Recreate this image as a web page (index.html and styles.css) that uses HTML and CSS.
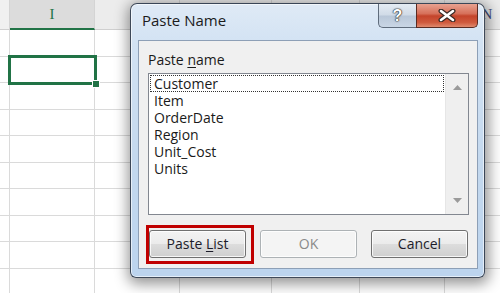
FILE: index.html
```html
<!DOCTYPE html>
<html>
<head>
<meta charset="utf-8">
<link rel="stylesheet" href="styles.css">
</head>
<body>
<div class="sheet">
  <div class="grid">
    <div class="hd corner"></div>
    <div class="hd sel-col">I</div>
    <div class="hd"></div>
    <div class="hd"></div>
    <div class="hd"></div>
    <div class="hd"></div>
    <div class="hd">N</div>
  </div>
  <div class="grid rows" id="rows"></div>
  <div class="selection"><span class="handle"></span></div>
</div>

<div class="dialog">
  <div class="titlebar">
    <span class="title">Paste Name</span>
    <div class="caption-btns">
      <div class="cap help">?</div>
      <div class="cap close">
        <svg width="18" height="13" viewBox="0 0 18 13">
          <path d="M3 2 L15 11 M15 2 L3 11" stroke="#3a2a26" stroke-width="5" stroke-linecap="round"/>
          <path d="M3 2 L15 11 M15 2 L3 11" stroke="#ffffff" stroke-width="2.6" stroke-linecap="round"/>
        </svg>
      </div>
    </div>
  </div>
  <div class="panel">
    <div class="label">Paste <u>n</u>ame</div>
    <div class="listbox">
      <div class="items">
        <div class="item focus">Customer</div>
        <div class="item">Item</div>
        <div class="item">OrderDate</div>
        <div class="item">Region</div>
        <div class="item">Unit_Cost</div>
        <div class="item">Units</div>
      </div>
      <div class="scrollbar">
        <svg class="arrow" width="9" height="5" viewBox="0 0 9 5"><path d="M0 5 L4.5 0 L9 5 Z" fill="#9a9a9a"/></svg>
        <svg class="arrow" width="9" height="5" viewBox="0 0 9 5"><path d="M0 0 L4.5 5 L9 0 Z" fill="#9a9a9a"/></svg>
      </div>
    </div>
    <div class="buttons">
      <div class="btn-wrap">
        <div class="btn"><span>Paste <u>L</u>ist</span></div>
        <div class="highlight"></div>
      </div>
      <div class="btn disabled"><span>OK</span></div>
      <div class="btn"><span>Cancel</span></div>
    </div>
  </div>
</div>
<script>
  var rows = document.getElementById('rows');
  for (var r = 0; r < 10; r++) {
    for (var c = 0; c < 7; c++) {
      var d = document.createElement('div');
      d.className = 'cell';
      rows.appendChild(d);
    }
  }
</script>
</body>
</html>
```

FILE: styles.css
```css
html, body {
  margin: 0;
  padding: 0;
}
body {
  width: 500px;
  height: 293px;
  overflow: hidden;
  position: relative;
  background: #ffffff;
  font-family: "Open Sans", "Noto Sans", sans-serif;
}

.sheet {
  position: relative;
  width: 500px;
  height: 293px;
  overflow: hidden;
}
.grid {
  display: grid;
  grid-template-columns: 10px 85px 85px 92px 88px 85px 85px;
  width: 530px;
}
.hd {
  height: 30px;
  box-sizing: border-box;
  background: #ececec;
  border-right: 1px solid #d4d4d4;
  border-bottom: 1px solid #cfcfcf;
  font-family: "Liberation Serif", serif;
  font-size: 15px;
  color: #3c4a7a;
  display: flex;
  align-items: center;
  justify-content: center;
}
.hd.corner {
  background: #f0f0f0;
}
.hd.sel-col {
  background: #dcdcdc;
  color: #217346;
  border-bottom: 2px solid #217346;
}
.rows {
  grid-auto-rows: 26.5px;
}
.cell {
  box-sizing: border-box;
  border-right: 1px solid #dadada;
  border-bottom: 1px solid #dadada;
}
.selection {
  position: absolute;
  left: 8px;
  top: 55px;
  width: 89px;
  height: 30px;
  box-sizing: border-box;
  border: 3px solid #217346;
}
.handle {
  position: absolute;
  right: -6px;
  bottom: -6px;
  width: 6px;
  height: 6px;
  background: #217346;
  border: 1px solid #ffffff;
}

/* Dialog window */
.dialog {
  position: absolute;
  left: 130px;
  top: 3px;
  width: 355px;
  height: 275px;
  box-sizing: border-box;
  border: 1px solid rgba(35, 45, 60, 0.85);
  border-radius: 7px 7px 6px 6px;
  background: linear-gradient(to bottom, #dfeaf6 0%, #d2e2f3 15%, #c3d8ee 60%, #bcd4ee 100%);
  box-shadow: 1px 3px 14px 3px rgba(0, 0, 0, 0.42), inset 0 0 0 1px rgba(255, 255, 255, 0.6);
  padding: 0 6px 8px 7px;
  display: flex;
  flex-direction: column;
}
.titlebar {
  height: 36px;
  display: flex;
  align-items: flex-start;
  padding-left: 4px;
  flex: none;
}
.title {
  margin-top: 6px;
  font-size: 15px;
  line-height: 20px;
  color: #1b1b1b;
}
.caption-btns {
  margin-left: auto;
  display: flex;
  height: 24px;
}
.cap {
  box-sizing: border-box;
  height: 24px;
  display: flex;
  align-items: center;
  justify-content: center;
}
.help {
  width: 38px;
  border: 1px solid #5f6c7c;
  border-top: none;
  border-right: none;
  border-radius: 0 0 0 5px;
  background: linear-gradient(to bottom, #e4ebf3 0%, #d0dbe7 48%, #b9c7d8 52%, #c9d6e5 100%);
  font-family: "Liberation Sans", sans-serif;
  font-weight: bold;
  font-size: 16px;
  line-height: 18px;
  color: #ffffff;
  text-shadow: 0 0 1px #222, 0 0 1px #222, 0 0 2px #333;
}
.close {
  width: 62px;
  border: 1px solid #5a2b22;
  border-top: none;
  border-radius: 0 0 5px 0;
  background: linear-gradient(to bottom, #e8a290 0%, #d6705a 42%, #c4442b 52%, #cf5a3e 80%, #e08a6e 100%);
}

.panel {
  flex: 1;
  border: 1px solid #8d9fb6;
  background: #f0f0f0;
  padding: 10px 8px 0 9px;
  display: flex;
  flex-direction: column;
}
.label {
  font-size: 14px;
  line-height: 18px;
  color: #1a1a1a;
  margin-bottom: 4px;
}
u {
  text-decoration: underline;
  text-underline-offset: 2px;
}
.listbox {
  width: 321px;
  height: 142px;
  box-sizing: border-box;
  border: 1px solid #828790;
  background: #ffffff;
  display: flex;
}
.items {
  flex: 1;
  padding-top: 1px;
}
.item {
  height: 17px;
  margin: 0 1px;
  padding-left: 4px;
  font-size: 14px;
  line-height: 17px;
  color: #1a1a1a;
}
.item.focus {
  outline: 1px dotted #333333;
  outline-offset: -1px;
}
.scrollbar {
  width: 22px;
  background: #efefef;
  border-left: 1px solid #e6e6e6;
  display: flex;
  flex-direction: column;
  justify-content: space-between;
  align-items: center;
  padding: 11px 0 11px;
}

.buttons {
  display: flex;
  gap: 14px;
  margin-top: 15px;
  margin-left: 1px;
}
.btn-wrap {
  position: relative;
}
.btn {
  width: 97px;
  height: 28px;
  box-sizing: border-box;
  border: 1px solid #707070;
  border-radius: 3px;
  background: linear-gradient(to bottom, #f3f3f3 0%, #ebebeb 50%, #dddddd 50%, #cfcfcf 100%);
  box-shadow: inset 0 0 0 1px rgba(255, 255, 255, 0.8);
  display: flex;
  align-items: center;
  justify-content: center;
  font-size: 14px;
  line-height: 18px;
  color: #1c1c2a;
}
.btn.disabled {
  border-color: #adb2b5;
  background: #f4f4f4;
  color: #8a8a8a;
}
.highlight {
  position: absolute;
  left: -3px;
  top: -5px;
  width: 108px;
  height: 39px;
  box-sizing: border-box;
  border: 3px solid #c00000;
}
```
